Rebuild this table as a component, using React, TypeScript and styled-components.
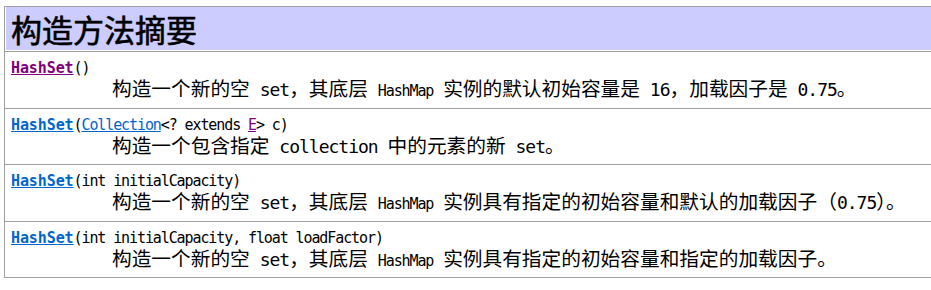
import React from 'react';
import styled, { createGlobalStyle } from 'styled-components';

const GlobalStyle = createGlobalStyle`
  html, body { margin: 0; padding: 0; background: #ffffff; overflow: hidden; }
  body { font-family: "DejaVu Sans Mono", "Noto Sans CJK SC", monospace; color: #000000; }
`;

const Page = styled.div`
  padding: 6px 0 0 4px;
`;

const Table = styled.div`
  width: 940px;
  display: flex;
  flex-direction: column;
  border-top: 1px solid #a0a0a0;
  border-left: 1px solid #a0a0a0;
  border-bottom: 1px solid #a0a0a0;
`;

const Header = styled.div`
  height: 43px;
  display: flex;
  align-items: center;
  padding-left: 5px;
  background: #ccccff;
  border-left: 1px solid #ffffff;
  border-bottom: 1px solid #ffffff;
  font-family: "Noto Sans CJK SC", sans-serif;
  font-weight: normal;
  -webkit-text-stroke: 0.6px #000000;
  font-size: 31px;
  color: #000000;
`;

const Row = styled.div`
  display: flex;
  flex-direction: column;
  height: 56.5px;
  box-sizing: border-box;
  padding: 7px 0 0 6px;
  border-top: 1px solid #a0a0a0;
`;

const Signature = styled.div`
  font-family: "DejaVu Sans Mono", monospace;
  font-size: 15px;
  letter-spacing: -1.1px;
  line-height: 19px;
  white-space: pre;
`;

const Name = styled.a<{ $visited?: boolean }>`
  font-weight: bold;
  letter-spacing: -0.1px;
  color: ${(p) => (p.$visited ? '#800080' : '#0066cc')};
  text-decoration: underline;
`;

const TypeLink = styled.a<{ $visited?: boolean }>`
  color: ${(p) => (p.$visited ? '#800080' : '#0066cc')};
  text-decoration: underline;
`;

const Desc = styled.div`
  padding-left: 101px;
  font-family: "DejaVu Sans Mono", monospace;
  font-size: 18px;
  letter-spacing: -1px;
  line-height: 22px;
  white-space: pre;
`;

const Han = styled.span`
  font-family: "Noto Sans CJK SC", sans-serif;
  font-size: 19.7px;
  letter-spacing: 0;
  line-height: 1;
`;

const Code = styled.code`
  font-family: "DejaVu Sans Mono", monospace;
  font-size: 15px;
  letter-spacing: -1.1px;
`;

const txt = (s: string) =>
  s.split(/([\u2E80-\uFFEF]+)/).map((part, i) =>
    /[\u2E80-\uFFEF]/.test(part) ? <Han key={i}>{part}</Han> : <React.Fragment key={i}>{part}</React.Fragment>
  );

export default function App() {
  return (
    <>
      <GlobalStyle />
      <Page>
        <Table>
          <Header>构造方法摘要</Header>
          <Row>
            <Signature>
              <Name href="#" $visited>HashSet</Name>()
            </Signature>
            <Desc>
              {txt('构造一个新的空 set，其底层 ')}
              <Code>HashMap</Code>
              {txt(' 实例的默认初始容量是 16，加载因子是 0.75。')}
            </Desc>
          </Row>
          <Row>
            <Signature>
              <Name href="#">HashSet</Name>(<TypeLink href="#">Collection</TypeLink>&lt;? extends{' '}
              <TypeLink href="#" $visited>E</TypeLink>&gt; c)
            </Signature>
            <Desc>{txt('构造一个包含指定 collection 中的元素的新 set。')}</Desc>
          </Row>
          <Row>
            <Signature>
              <Name href="#">HashSet</Name>(int initialCapacity)
            </Signature>
            <Desc>
              {txt('构造一个新的空 set，其底层 ')}
              <Code>HashMap</Code>
              {txt(' 实例具有指定的初始容量和默认的加载因子（0.75）。')}
            </Desc>
          </Row>
          <Row>
            <Signature>
              <Name href="#">HashSet</Name>(int initialCapacity, float loadFactor)
            </Signature>
            <Desc>
              {txt('构造一个新的空 set，其底层 ')}
              <Code>HashMap</Code>
              {txt(' 实例具有指定的初始容量和指定的加载因子。')}
            </Desc>
          </Row>
        </Table>
      </Page>
    </>
  );
}
